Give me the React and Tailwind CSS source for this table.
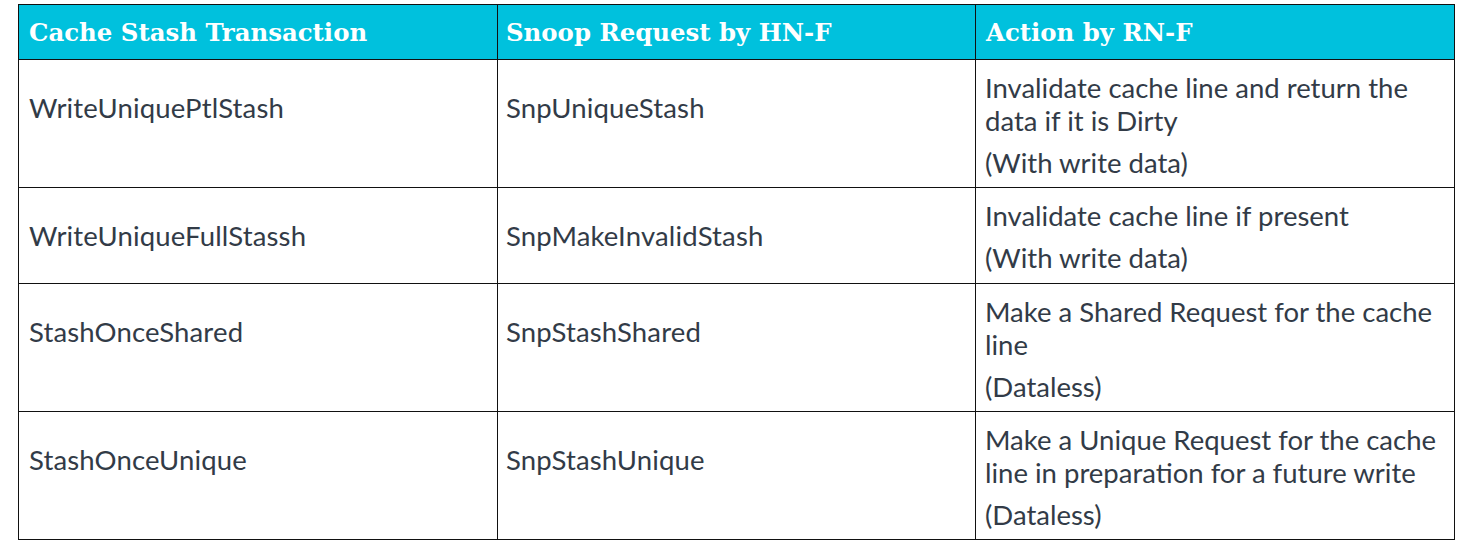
import React from "react";

const rows = [
  {
    a: "WriteUniquePtlStash",
    b: "SnpUniqueStash",
    c: ["Invalidate cache line and return the data if it is Dirty", "(With write data)"],
    tall: true,
    h: "h-[128px]",
  },
  {
    a: "WriteUniqueFullStassh",
    b: "SnpMakeInvalidStash",
    c: ["Invalidate cache line if present", "(With write data)"],
    tall: false,
    h: "h-[96px]",
  },
  {
    a: "StashOnceShared",
    b: "SnpStashShared",
    c: ["Make a Shared Request for the cache line", "(Dataless)"],
    tall: true,
    h: "h-[128px]",
  },
  {
    a: "StashOnceUnique",
    b: "SnpStashUnique",
    c: ["Make a Unique Request for the cache line in preparation for a future write", "(Dataless)"],
    tall: true,
    h: "h-[128px]",
  },
];

const headerFont = { fontFamily: '"DejaVu Serif", "Liberation Serif", serif' };

export default function App() {
  return (
    <div className="w-[1474px] h-[552px] bg-white pl-[18px] pt-[4px]">
      <div
        className="grid grid-cols-[479px_478px_479px] w-[1437px] border-l border-t border-[#111] text-[#323b47]"
        style={{ fontFamily: 'Lato, "Open Sans", sans-serif' }}
      >
        {["Cache Stash Transaction", "Snoop Request by HN-F", "Action by RN-F"].map((t, i) => (
          <div
            key={t}
            className={`h-[55px] bg-[#00c1dd] border-r border-b border-[#111] flex items-center ${i === 1 ? "pl-[8px]" : "pl-[10px]"} pt-[2px] text-white font-bold text-[24.4px]`}
            style={headerFont}
          >
            {t}
          </div>
        ))}
        {rows.map((r) => (
          <React.Fragment key={r.a}>
            <div
              className={`${r.h} border-r border-b border-[#111] flex items-center pl-[10px] text-[27.5px] leading-[33px] tracking-[0.15px] ${r.tall ? "pb-[33px]" : ""}`}
            >
              {r.a}
            </div>
            <div
              className={`${r.h} border-r border-b border-[#111] flex items-center pl-[8px] text-[27.5px] leading-[33px] tracking-[0.15px] ${r.tall ? "pb-[33px]" : ""}`}
            >
              {r.b}
            </div>
            <div
              className={`${r.h} border-r border-b border-[#111] pl-[9px] pr-[10px] pt-[11px] text-[27.5px] leading-[33px] flex flex-col gap-[9px]`}
            >
              {r.c.map((p) => (
                <p key={p}>{p}</p>
              ))}
            </div>
          </React.Fragment>
        ))}
      </div>
    </div>
  );
}
